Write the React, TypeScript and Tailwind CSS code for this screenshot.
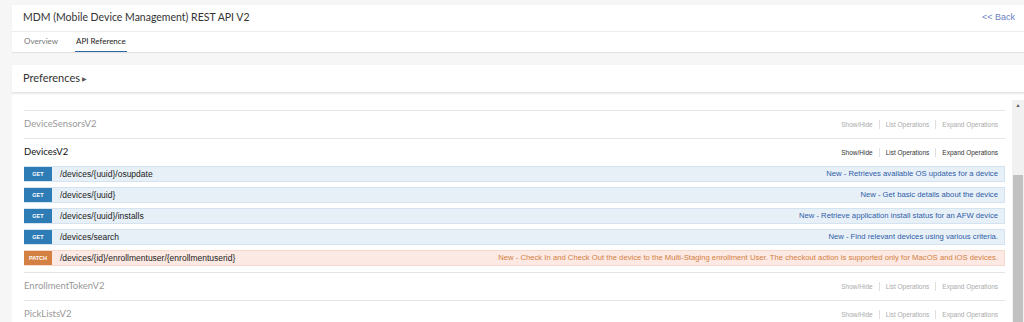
import * as React from 'react'

interface Operation {
  method: 'GET' | 'PATCH';
  path: string;
  summary: string;
}

const operations: Operation[] = [
  { method: 'GET', path: '/devices/{uuid}/osupdate', summary: 'New - Retrieves available OS updates for a device' },
  { method: 'GET', path: '/devices/{uuid}', summary: 'New - Get basic details about the device' },
  { method: 'GET', path: '/devices/{uuid}/installs', summary: 'New - Retrieve application install status for an AFW device' },
  { method: 'GET', path: '/devices/search', summary: 'New - Find relevant devices using various criteria.' },
  {
    method: 'PATCH',
    path: '/devices/{id}/enrollmentuser/{enrollmentuserid}',
    summary: 'New - Check In and Check Out the device to the Multi-Staging enrollment User. The checkout action is supported only for MacOS and iOS devices.',
  },
];

function SectionHeader({ name, active }: { name: string; active?: boolean }) {
  return (
    <div className="flex items-center justify-between h-[28px] border-t border-[#e4e4e4]">
      <span className={`font-['Lato',sans-serif] text-[9.5px] ${active ? 'text-[#111]' : 'text-[#999]'}`}>{name}</span>
      <div className={`flex items-center text-[6.5px] pr-[7px] ${active ? 'text-[#333]' : 'text-[#aaa]'}`}>
        <span>Show/Hide</span>
        <span className="mx-[6px] h-[9px] w-px bg-[#e0e0e0]" />
        <span>List Operations</span>
        <span className="mx-[6px] h-[9px] w-px bg-[#e0e0e0]" />
        <span>Expand Operations</span>
      </div>
    </div>
  );
}

function OperationRow({ op }: { op: Operation }) {
  const isGet = op.method === 'GET';
  return (
    <div
      className={`flex items-center h-[16px] border ${
        isGet ? 'bg-[#e7f0f7] border-[#d4e3ef]' : 'bg-[#fce9e3] border-[#f5d9cc]'
      }`}
    >
      <span
        className={`w-[28px] h-full -ml-px flex items-center justify-center text-white text-[5.5px] font-bold ${
          isGet ? 'bg-[#2d7cb5]' : 'bg-[#d38042]'
        }`}
      >
        {op.method}
      </span>
      <span className="ml-[8px] text-[8.5px] text-[#222]">{op.path}</span>
      <span className={`ml-auto pr-[6px] text-[7.7px] ${isGet ? 'text-[#2f5da8]' : 'text-[#d38042]'}`}>
        {op.summary}
      </span>
    </div>
  );
}

export default function App() {
  return (
    <div className="w-[1024px] h-[322px] overflow-hidden bg-[#f6f6f6] pt-[5px] font-['Liberation_Sans',Arial,sans-serif]">
      {/* Header */}
      <div className="ml-[12px] bg-white shadow-[0_1px_1px_rgba(0,0,0,0.08)] font-['Lato',sans-serif]">
        <div className="flex items-center justify-between h-[27px] pl-[11px] pr-[9px] border-b border-[#ececec]">
          <span className="text-[10.5px] text-[#333]">MDM (Mobile Device Management) REST API V2</span>
          <span className="text-[9px] text-[#6a7fc1] font-['Liberation_Sans',Arial,sans-serif]">&lt;&lt; Back</span>
        </div>
        <div className="flex items-end h-[20px] pl-[12px] gap-[17px] text-[8px]">
          <span className="pb-[5px] text-[#777]">Overview</span>
          <span className="pb-[4px] text-[#222] border-b-[1.5px] border-[#2d6aa3] px-[1px]">API Reference</span>
        </div>
      </div>

      {/* Preferences */}
      <div className="ml-[12px] mt-[13px] h-[27px] bg-white shadow-[0_1px_1px_rgba(0,0,0,0.08)] flex items-center pl-[11px] font-['Lato',sans-serif]">
        <span className="text-[11px] text-[#333]">Preferences</span>
        <span className="ml-[2px] text-[6px] text-[#555]">▶</span>
      </div>

      {/* Main */}
      <div className="ml-[12px] mt-[3px] flex h-[230px] bg-white">
        <div className="flex-1 pl-[12px] pr-[7px] pt-[15px]">
          <SectionHeader name="DeviceSensorsV2" />
          <SectionHeader name="DevicesV2" active />
          <div className="flex flex-col gap-[5px]">
            {operations.map((op) => (
              <OperationRow key={op.path} op={op} />
            ))}
          </div>
          <div className="mt-[6px]">
            <SectionHeader name="EnrollmentTokenV2" />
            <SectionHeader name="PickListsV2" />
          </div>
        </div>
        {/* scrollbar */}
        <div className="w-[12px] mt-[5px] bg-[#f1f1f1] flex flex-col">
          <div className="h-[12px] flex items-center justify-center text-[5px] text-[#555]">▲</div>
          <div className="h-[63px]" />
          <div className="flex-1 mx-[1px] bg-[#c1c1c1]" />
        </div>
      </div>
    </div>
  );
}
